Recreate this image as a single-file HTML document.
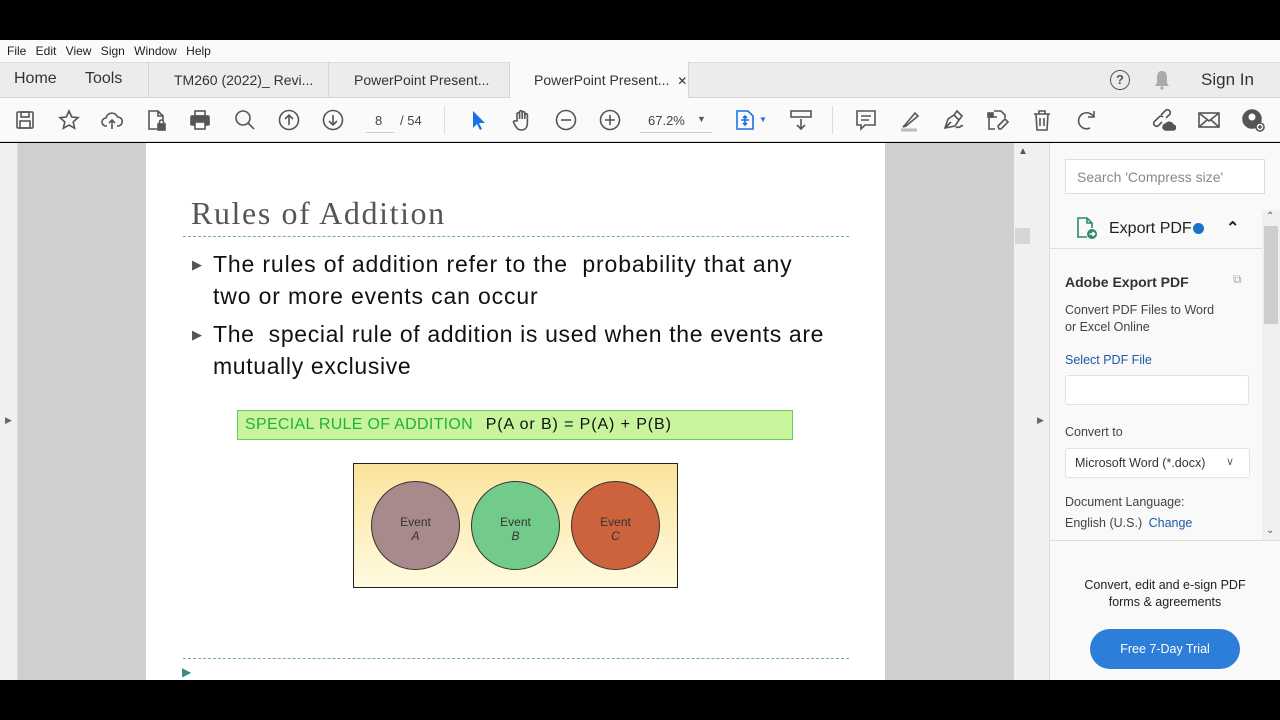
<!DOCTYPE html>
<html><head><meta charset="utf-8"><style>
*{margin:0;padding:0;box-sizing:border-box}
body{width:1280px;height:720px;position:relative;overflow:hidden;background:#000;font-family:"Liberation Sans",sans-serif}
.a{position:absolute}
.t{position:absolute;white-space:nowrap}
svg.i{position:absolute;width:24px;height:24px;fill:none;stroke:#555;stroke-width:1.6}
</style></head><body>
<div class="a" style="left:0;top:40px;width:1280px;height:22px;background:#fafafa"></div>
<div class="t" style="left:7px;top:44px;font-size:12px;color:#222;word-spacing:6px">File Edit View Sign Window Help</div>
<div class="a" style="left:0;top:62px;width:1280px;height:36px;background:#ececec;border-top:1px solid #ddd;border-bottom:1px solid #d6d6d6"></div>
<div class="t" style="left:14px;top:70px;font-size:16px;color:#333">Home</div>
<div class="t" style="left:85px;top:70px;font-size:16px;color:#333">Tools</div>
<div class="a" style="left:148px;top:62px;width:1px;height:36px;background:#d4d4d4"></div>
<div class="t" style="left:174px;top:72px;font-size:14px;color:#333">TM260 (2022)_ Revi...</div>
<div class="a" style="left:328px;top:62px;width:1px;height:36px;background:#d4d4d4"></div>
<div class="t" style="left:354px;top:72px;font-size:14px;color:#333">PowerPoint Present...</div>
<div class="a" style="left:509px;top:62px;width:180px;height:37px;background:#fafafa;border-left:1px solid #d4d4d4;border-right:1px solid #d4d4d4"></div>
<div class="t" style="left:534px;top:72px;font-size:14px;color:#333">PowerPoint Present... <span style="font-size:12px;margin-left:4px">✕</span></div>
<div class="a" style="left:1110px;top:70px;width:20px;height:20px;border:1.6px solid #555;border-radius:50%;font-size:13px;text-align:center;line-height:17px;color:#555;font-weight:bold">?</div>
<svg class="i" style="left:1150px;top:68px" viewBox="0 0 24 24"><path d="M12 3c-4 0-5 3-5 7v5l-2 3h14l-2-3v-5c0-4-1-7-5-7z" fill="#aaa" stroke="none"/><circle cx="12" cy="20" r="1.6" fill="#aaa" stroke="none"/></svg>
<div class="t" style="left:1201px;top:70px;font-size:17px;color:#333">Sign In</div>
<div class="a" style="left:0;top:98px;width:1280px;height:44px;background:#fafafa;border-bottom:1px solid #ddd"></div>
<svg class="i" style="left:13px;top:108px" viewBox="0 0 24 24"><rect x="4" y="4" width="16" height="16" rx="1"/><rect x="8" y="4" width="8" height="5"/><rect x="7" y="13" width="10" height="7"/></svg>
<svg class="i" style="left:57px;top:108px" viewBox="0 0 24 24"><path d="M12 3l2.7 6 6.3.6-4.8 4.3 1.4 6.4L12 17l-5.6 3.3 1.4-6.4L3 9.6 9.3 9z"/></svg>
<svg class="i" style="left:100px;top:108px" viewBox="0 0 24 24"><path d="M7 18H6a4 4 0 0 1 0-8 6 6 0 0 1 11.5-1A4.5 4.5 0 0 1 18 18h-1M12 21v-9M9 15l3-3 3 3"/></svg>
<svg class="i" style="left:144px;top:108px" viewBox="0 0 24 24"><path d="M13 21H5V3h9l5 5v4M14 3v5h5"/><rect x="14" y="16" width="7" height="6" fill="#555"/><path d="M15.5 16v-2a2 2 0 0 1 4 0v2"/></svg>
<svg class="i" style="left:188px;top:108px" viewBox="0 0 24 24"><rect x="3" y="8" width="18" height="9" rx="1" fill="#555"/><rect x="7" y="3" width="10" height="5"/><rect x="7" y="14" width="10" height="7" fill="#fff"/></svg>
<svg class="i" style="left:233px;top:108px" viewBox="0 0 24 24"><circle cx="10" cy="10" r="7"/><path d="M15 15l6 6M7 10h.1M10 10h.1M13 10h.1"/></svg>
<svg class="i" style="left:277px;top:108px" viewBox="0 0 24 24"><circle cx="12" cy="12" r="9.5"/><path d="M12 17V7M8 11l4-4 4 4"/></svg>
<svg class="i" style="left:321px;top:108px" viewBox="0 0 24 24"><circle cx="12" cy="12" r="9.5"/><path d="M12 7v10M8 13l4 4 4-4"/></svg>
<div class="t" style="left:375px;top:113px;font-size:13px;color:#444">8</div>
<div class="a" style="left:366px;top:132px;width:28px;height:1px;background:#ccc"></div>
<div class="t" style="left:400px;top:113px;font-size:13px;color:#444">/ 54</div>
<div class="a" style="left:444px;top:106px;width:1px;height:28px;background:#ddd"></div>
<svg class="i" style="left:466px;top:108px" viewBox="0 0 24 24"><path d="M7 3v17l4-4 3 6 2-1-3-6h6z" fill="#1473e6" stroke="none"/></svg>
<svg class="i" style="left:510px;top:108px" viewBox="0 0 24 24"><path d="M7 13V6a1.3 1.3 0 0 1 2.6 0v5V4a1.3 1.3 0 0 1 2.6 0v7V5a1.3 1.3 0 0 1 2.6 0v6V7a1.3 1.3 0 0 1 2.6 0v8c0 4-2 7-6 7-3 0-4-1-6-4l-2-4a1.3 1.3 0 0 1 2-1z"/></svg>
<svg class="i" style="left:554px;top:108px" viewBox="0 0 24 24"><circle cx="12" cy="12" r="9.5"/><path d="M7 12h10"/></svg>
<svg class="i" style="left:598px;top:108px" viewBox="0 0 24 24"><circle cx="12" cy="12" r="9.5"/><path d="M7 12h10M12 7v10"/></svg>
<div class="t" style="left:648px;top:113px;font-size:13px;color:#444">67.2%</div>
<div class="t" style="left:697px;top:114px;font-size:9px;color:#555">▼</div>
<div class="a" style="left:640px;top:132px;width:72px;height:1px;background:#ccc"></div>
<svg class="i" style="left:733px;top:108px;stroke:#1473e6" viewBox="0 0 24 24"><path d="M4 3h11l5 5v13H4zM12 8v9M8 12h8M10 10l2-2 2 2M10 15l2 2 2-2"/></svg>
<div class="t" style="left:759px;top:115px;font-size:8px;color:#1473e6">▼</div>
<svg class="i" style="left:789px;top:108px" viewBox="0 0 24 24"><rect x="2" y="3" width="20" height="6"/><path d="M12 11v10M8 17l4 4 4-4M5 6h.1M9 6h.1M13 6h.1M17 6h.1"/></svg>
<div class="a" style="left:832px;top:106px;width:1px;height:28px;background:#ddd"></div>
<svg class="i" style="left:854px;top:108px" viewBox="0 0 24 24"><path d="M3 3h18v14H11l-4 4v-4H3zM7 8h10M7 12h8"/></svg>
<svg class="i" style="left:898px;top:108px" viewBox="0 0 24 24"><path d="M7 17l10-12 3 3-12 10-3 1z" /><path d="M3 22h16" stroke="#bbb" stroke-width="3"/></svg>
<svg class="i" style="left:941px;top:108px" viewBox="0 0 24 24"><path d="M4 20l3-9 6-4 5 5-4 6zM4 20l6-6M13 7l3-4 5 5-3 4M15 20c2-2 3 0 4-1s1-2 3-1"/></svg>
<svg class="i" style="left:985px;top:108px" viewBox="0 0 24 24"><path d="M9 3h7l4 4v3M10 21H4V9h8M14 21l-1-3 7-7 3 3-7 7z"/><rect x="3" y="5" width="5" height="4" fill="#555"/></svg>
<svg class="i" style="left:1030px;top:108px" viewBox="0 0 24 24"><path d="M4 6h16M9 6V3h6v3M6 6l1 16h10l1-16M10 10v8M14 10v8"/></svg>
<svg class="i" style="left:1074px;top:108px" viewBox="0 0 24 24"><path d="M16 20a8 8 0 1 1 3-12M20 3v6h-6"/></svg>
<svg class="i" style="left:1152px;top:108px" viewBox="0 0 24 24"><path d="M10 14l-4 4a3 3 0 0 1-4-4l5-5a3 3 0 0 1 4 0M14 10l4-4a3 3 0 0 0-4-4l-5 5"/><path d="M14 22a3 3 0 0 1 0-6 4 4 0 0 1 7 1 2.5 2.5 0 0 1 0 5z" fill="#555"/></svg>
<svg class="i" style="left:1197px;top:108px" viewBox="0 0 24 24"><rect x="2" y="5" width="20" height="14"/><path d="M2 5l10 8 10-8M2 19l8-7M22 19l-8-7"/></svg>
<svg class="i" style="left:1241px;top:108px" viewBox="0 0 24 24"><circle cx="11" cy="11" r="9" fill="#555"/><circle cx="11" cy="9" r="3.5" fill="#fff" stroke="none"/><circle cx="19" cy="19" r="4" fill="#fff" stroke="#555"/><path d="M19 17v4M17 19h4"/></svg>

<div class="a" style="left:0;top:143px;width:18px;height:537px;background:#f0f0f0;border-right:1px solid #ddd"></div>
<div class="t" style="left:5px;top:415px;font-size:9px;color:#666">▶</div>
<div class="a" style="left:18px;top:143px;width:996px;height:537px;background:#cfcfcf"></div>
<div class="a" style="left:146px;top:143px;width:739px;height:537px;background:#fff"></div>
<div class="t" style="left:191px;top:195px;font-size:32px;color:#555;font-family:'Liberation Serif',serif;letter-spacing:1.6px">Rules of Addition</div>
<div class="a" style="left:183px;top:236px;width:666px;border-top:1px dashed #7aa"></div>
<div class="t" style="left:192px;top:257px;font-size:13px;color:#555">▶</div>
<div class="t" style="left:213px;top:248px;font-size:23px;color:#111;line-height:32px;letter-spacing:0.85px">The rules of addition refer to the&nbsp; probability that any<br>two or more events can occur</div>
<div class="t" style="left:192px;top:327px;font-size:13px;color:#555">▶</div>
<div class="t" style="left:213px;top:318px;font-size:23px;color:#111;line-height:32px;letter-spacing:0.65px">The&nbsp; special rule of addition is used when the events are<br>mutually exclusive</div>
<div class="a" style="left:237px;top:410px;width:556px;height:30px;background:#c8f59c;border:1px solid #6c6"></div>
<div class="t" style="left:245px;top:416px;font-size:16px;color:#22b03c;letter-spacing:0.3px">SPECIAL RULE OF ADDITION <span style="color:#111;margin-left:8px;letter-spacing:0.9px">P(A or B) = P(A) + P(B)</span></div>
<div class="a" style="left:353px;top:463px;width:325px;height:125px;border:1.5px solid #222;background:linear-gradient(#fbe39c,#fffbe0)"></div>
<div class="a" style="left:371px;top:481px;width:89px;height:89px;border-radius:50%;background:#a88a8c;border:1px solid #333"></div>
<div class="a" style="left:471px;top:481px;width:89px;height:89px;border-radius:50%;background:#73cb8b;border:1px solid #333"></div>
<div class="a" style="left:571px;top:481px;width:89px;height:89px;border-radius:50%;background:#cc633c;border:1px solid #333"></div>
<div class="t" style="left:371px;top:515px;width:89px;text-align:center;font-size:12px;color:#333;line-height:14px">Event<br><i>A</i></div>
<div class="t" style="left:471px;top:515px;width:89px;text-align:center;font-size:12px;color:#333;line-height:14px">Event<br><i>B</i></div>
<div class="t" style="left:571px;top:515px;width:89px;text-align:center;font-size:12px;color:#333;line-height:14px">Event<br><i>C</i></div>
<div class="a" style="left:183px;top:658px;width:666px;border-top:1px dashed #7aa"></div>
<div class="t" style="left:182px;top:665px;font-size:12px;color:#3a8a8a">▶</div>

<div class="a" style="left:1014px;top:143px;width:18px;height:537px;background:#f0f0f0"></div>
<div class="t" style="left:1018px;top:146px;font-size:10px;color:#555">▲</div>
<div class="a" style="left:1015px;top:228px;width:15px;height:16px;background:#d6d6d6"></div>
<div class="a" style="left:1032px;top:143px;width:18px;height:537px;background:#f0f0f0;border-right:1px solid #ddd"></div>
<div class="t" style="left:1037px;top:415px;font-size:9px;color:#666">▶</div>
<div class="a" style="left:1050px;top:143px;width:230px;height:537px;background:#f9f9f9"></div>
<div class="a" style="left:1065px;top:159px;width:200px;height:35px;background:#fff;border:1px solid #ddd"></div>
<div class="t" style="left:1077px;top:169px;font-size:14px;color:#888">Search 'Compress size'</div>
<div class="a" style="left:1050px;top:248px;width:212px;height:1px;background:#e0e0e0"></div>
<svg class="i" style="left:1075px;top:216px" viewBox="0 0 24 24"><path d="M12 21H3V2h9l5 5v5M12 2v5h5" stroke="#2a8a6f"/><circle cx="17" cy="18" r="5" fill="#2a8a6f" stroke="none"/><path d="M14.5 18h5M17.5 16l2 2-2 2" stroke="#fff"/></svg>
<div class="t" style="left:1109px;top:220px;font-size:16px;color:#222">Export PDF</div>
<div class="a" style="left:1193px;top:223px;width:11px;height:11px;border-radius:50%;background:#1a73c8"></div>
<div class="t" style="left:1226px;top:218px;font-size:16px;color:#222;font-weight:bold">⌃</div>
<div class="t" style="left:1065px;top:274px;font-size:14px;color:#333;font-weight:bold">Adobe Export PDF</div>
<div class="t" style="left:1233px;top:272px;font-size:12px;color:#aaa">⧉</div>
<div class="t" style="left:1065px;top:302px;font-size:12.5px;color:#444;line-height:17px">Convert PDF Files to Word<br>or Excel Online</div>
<div class="t" style="left:1065px;top:353px;font-size:12.5px;color:#1d5aa5">Select PDF File</div>
<div class="a" style="left:1065px;top:375px;width:184px;height:30px;background:#fff;border:1px solid #e2e2e2;border-radius:3px"></div>
<div class="t" style="left:1065px;top:425px;font-size:12.5px;color:#444">Convert to</div>
<div class="a" style="left:1065px;top:448px;width:185px;height:30px;background:#fff;border:1px solid #e2e2e2;border-radius:3px"></div>
<div class="t" style="left:1075px;top:456px;font-size:12.5px;color:#333">Microsoft Word (*.docx)</div>
<div class="t" style="left:1226px;top:455px;font-size:11px;color:#666">∨</div>
<div class="t" style="left:1065px;top:495px;font-size:12.5px;color:#444">Document Language:</div>
<div class="t" style="left:1065px;top:516px;font-size:12.5px;color:#444">English (U.S.) <span style="color:#1d5aa5;margin-left:3px">Change</span></div>
<div class="a" style="left:1262px;top:210px;width:18px;height:330px;background:#f0f0f0"></div>
<div class="t" style="left:1266px;top:211px;font-size:10px;color:#555">⌃</div>
<div class="a" style="left:1264px;top:226px;width:14px;height:98px;background:#cdcdcd"></div>
<div class="t" style="left:1266px;top:525px;font-size:10px;color:#555">⌄</div>
<div class="a" style="left:1050px;top:540px;width:230px;height:1px;background:#ddd"></div>
<div class="t" style="left:1050px;top:577px;width:230px;text-align:center;font-size:12.5px;color:#222;line-height:17px">Convert, edit and e-sign PDF<br>forms &amp; agreements</div>
<div class="a" style="left:1090px;top:629px;width:150px;height:40px;border-radius:20px;background:#2c7ed9;color:#fff;font-size:12.5px;text-align:center;line-height:40px">Free 7-Day Trial</div>
<div class="a" style="left:0;top:680px;width:1280px;height:40px;background:#000"></div>
</body></html>
